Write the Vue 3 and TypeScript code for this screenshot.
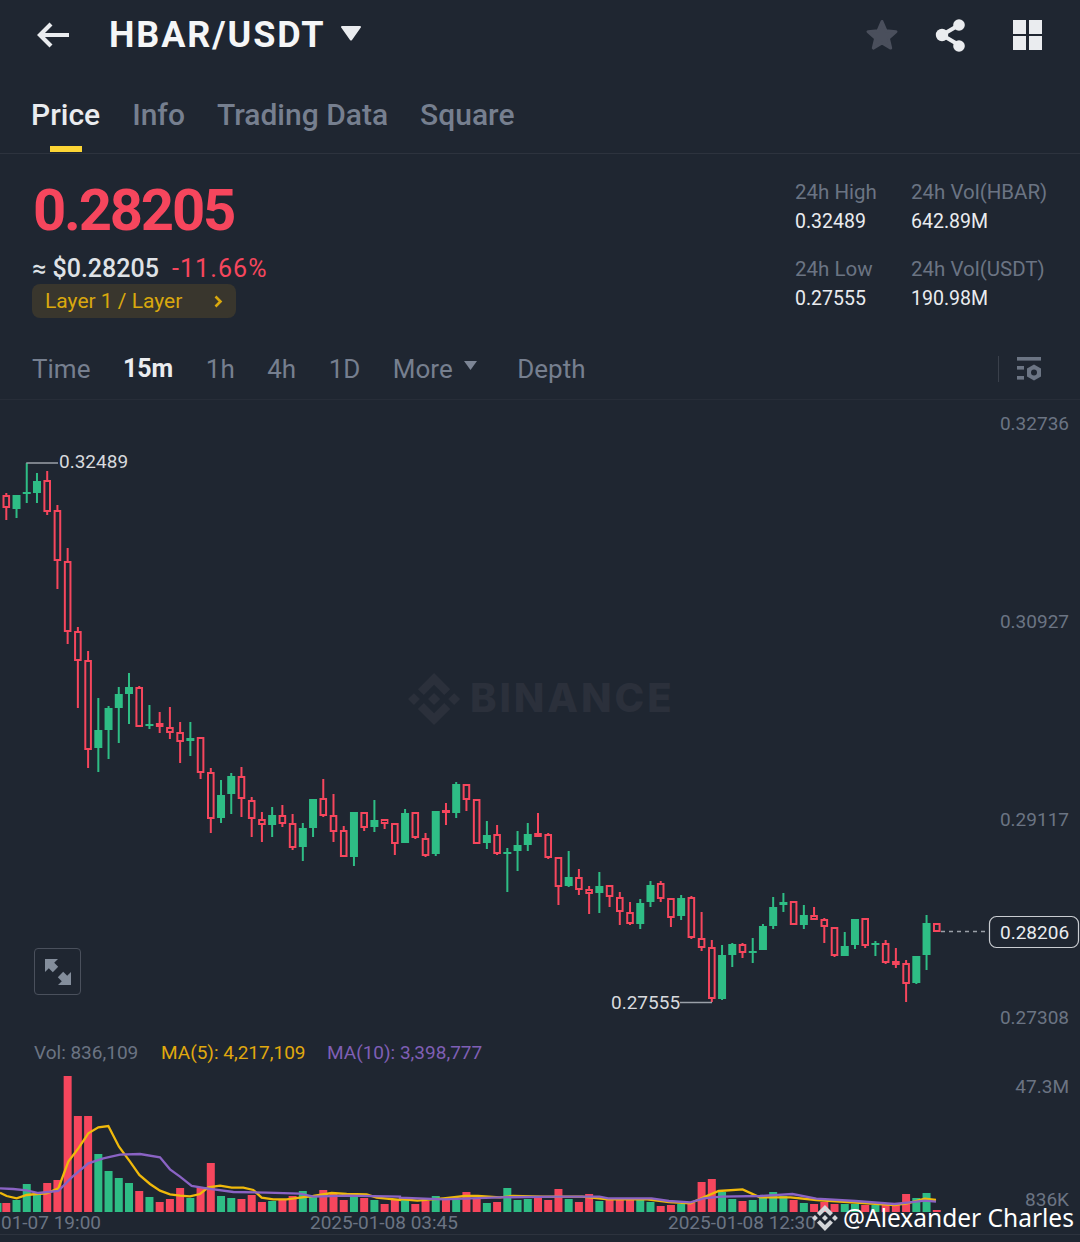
<script setup lang="ts">
import { computed } from 'vue'

// [wickTop, bodyTop, bodyBottom, wickBottom, up]
type Candle = [number, number, number, number, number]

const STEP = 10.225
const X0 = 6.3
const BASE = 1212

const candles: Candle[] = [
  [493, 495, 508, 520, 0], [495, 495, 509, 518, 1], [463, 492, 494, 503, 1], [473, 481, 493, 503, 1],
  [471, 480, 512, 515, 0], [505, 510, 561, 589, 0], [548, 561, 632, 644, 0], [627, 631, 661, 708, 0],
  [651, 660, 750, 768, 0], [698, 730, 748, 772, 1], [706, 708, 730, 759, 1], [687, 694, 708, 743, 1],
  [673, 687, 694, 724, 1], [686, 687, 727, 727, 0], [705, 724, 726, 729, 1], [712, 723, 727, 733, 0],
  [707, 727, 733, 739, 0], [722, 732, 742, 763, 0], [722, 738, 741, 756, 1], [737, 737, 773, 779, 0],
  [768, 772, 819, 833, 0], [780, 795, 818, 823, 1], [773, 776, 794, 814, 1], [767, 776, 799, 817, 0],
  [797, 800, 819, 837, 0], [812, 819, 825, 842, 0], [807, 815, 825, 837, 1], [805, 815, 824, 827, 0],
  [814, 823, 848, 850, 0], [823, 828, 847, 861, 1], [799, 799, 828, 837, 1], [779, 798, 816, 817, 0],
  [794, 815, 832, 842, 0], [826, 830, 857, 857, 0], [812, 812, 857, 866, 1], [812, 812, 828, 831, 0],
  [800, 820, 827, 832, 1], [819, 819, 824, 829, 0], [823, 823, 844, 855, 0], [809, 813, 843, 843, 1],
  [812, 812, 838, 839, 0], [833, 838, 856, 857, 0], [811, 811, 854, 856, 1], [803, 810, 813, 825, 0],
  [782, 784, 813, 818, 1], [784, 784, 800, 811, 0], [799, 799, 844, 844, 0], [821, 835, 843, 849, 1],
  [825, 834, 854, 855, 0], [848, 852, 853, 892, 1], [831, 845, 851, 871, 1], [823, 834, 845, 851, 1],
  [813, 833, 837, 837, 0], [833, 834, 858, 859, 0], [857, 857, 887, 905, 0], [851, 877, 886, 887, 1],
  [869, 877, 890, 895, 0], [886, 889, 894, 914, 0], [872, 886, 893, 913, 1], [885, 885, 897, 907, 0],
  [892, 897, 912, 925, 0], [902, 912, 924, 925, 0], [899, 903, 924, 929, 1], [881, 885, 902, 907, 1],
  [881, 883, 899, 902, 0], [898, 898, 918, 927, 0], [895, 898, 916, 920, 1], [896, 897, 938, 939, 0],
  [912, 938, 948, 951, 0], [940, 947, 999, 1002, 0], [945, 955, 999, 1000, 1], [943, 944, 955, 967, 1],
  [943, 944, 953, 958, 0], [938, 951, 953, 963, 1], [924, 926, 950, 950, 1], [897, 907, 926, 929, 1],
  [893, 902, 905, 912, 1], [901, 901, 925, 925, 0], [905, 915, 925, 929, 1], [907, 915, 920, 920, 0],
  [918, 919, 927, 943, 0], [927, 927, 956, 957, 0], [932, 946, 956, 956, 1], [919, 919, 945, 949, 1],
  [918, 918, 946, 948, 0], [941, 943, 944, 956, 1], [940, 943, 963, 964, 0], [948, 961, 965, 968, 0],
  [960, 963, 984, 1002, 0], [956, 956, 983, 984, 1], [915, 923, 955, 970, 1], [923, 923, 932, 932, 0]
]

// bar height in px, index matches the candle above it
const volumes = [
  9, 12, 28, 18, 29, 32, 136, 96, 96, 58, 41, 34, 29, 21, 15, 10, 13, 24, 14, 25, 49, 16, 14, 13, 17, 10, 11, 12,
  16, 21, 15, 22, 18, 12, 16, 14, 12, 8, 12, 14, 8, 11, 16, 13, 12, 20, 13, 9, 10, 24, 12, 13, 16, 12, 23, 13, 10,
  18, 11, 13, 12, 13, 12, 10, 6, 7, 8, 9, 30, 33, 20, 13, 11, 12, 14, 20, 16, 12, 9, 8, 10, 8, 8, 8, 7, 7, 7, 7,
  18, 14, 19, 2
]

const ma5Left = [[0,458],[20,468],[50,475],[80,465],[110,462],[140,460],[175,445],[205,365],[235,325],[265,280],[295,262],[325,258],[357,320],[390,365],[418,405],[450,432],[480,452],[510,463],[540,467],[570,469],[600,462],[625,442],[660,437],[695,443],[730,443],[760,450],[785,473],[820,478],[860,478],[900,473],[940,468],[995,459],[1040,462],[1100,463],[1130,473],[1200,480]]
const ma5Right = [[0,237],[40,242],[100,235],[150,228],[180,228],[230,232],[260,228],[330,230],[420,230],[480,238],[570,238],[620,246],[670,250],[700,232],[735,213],[790,208],[830,232],[900,232],[960,240],[1050,248],[1140,255],[1170,250],[1210,236],[1236,240]]
const ma10Left = [[0,445],[40,447],[80,451],[115,459],[175,453],[215,412],[265,370],[310,355],[360,344],[420,342],[480,352],[510,388],[540,410],[575,438],[620,445],[700,456],[800,458],[900,461],[940,470],[1040,467],[1200,470]]
const ma10Right = [[0,233],[100,238],[230,232],[360,230],[460,230],[480,235],[580,235],[620,243],[670,247],[700,235],[740,230],[830,228],[905,222],[960,236],[1050,243],[1140,252],[1170,248],[1210,242],[1236,245]]

function linePoints(left: number[][], right: number[][]) {
  const a = left.map(([x, y]) => `${x / 3},${1040 + y / 3}`)
  const b = right.map(([x, y]) => `${400 + x / 2.306},${1120 + y / 3}`)
  return [...a, ...b].join(' ')
}

const ma5 = computed(() => linePoints(ma5Left, ma5Right))
const ma10 = computed(() => linePoints(ma10Left, ma10Right))

const candleItems = computed(() =>
  candles.map(([wt, bt, bb, wb, up], i) => ({
    x: X0 + i * STEP,
    wt, bt, bb, wb,
    color: up ? '#2ebd85' : '#f6465d',
    filled: up === 1 || bb - bt < 4
  }))
)

const bars = computed(() =>
  volumes.map((h, i) => ({
    x: X0 + i * STEP - 4,
    y: BASE - h,
    h,
    color: candles[i][4] ? '#2ebd85' : '#f6465d'
  }))
)

const tabs = ['Price', 'Info', 'Trading Data', 'Square']
const intervals = ['Time', '15m', '1h', '4h', '1D']
const stats = [
  { label: '24h High', value: '0.32489' },
  { label: '24h Vol(HBAR)', value: '642.89M' },
  { label: '24h Low', value: '0.27555' },
  { label: '24h Vol(USDT)', value: '190.98M' }
]
const priceAxis = [
  { y: 430, text: '0.32736' },
  { y: 628, text: '0.30927' },
  { y: 826, text: '0.29117' },
  { y: 1024, text: '0.27308' },
  { y: 1093, text: '47.3M' },
  { y: 1206, text: '836K' }
]
const LOGO = 'M38.2 53.2 62.8 28.6 87.4 53.2 101.7 38.9 62.8 0 23.9 38.9ZM0 62.8 14.3 48.5 28.6 62.8 14.3 77.1ZM38.2 72.3 62.8 96.9 87.4 72.3 101.7 86.6 62.8 125.5 23.9 86.6ZM96.9 62.8 111.2 48.5 125.5 62.8 111.2 77.1ZM77.3 62.8 62.8 48.2 48.3 62.8 62.8 77.3Z'
</script>

<template>
  <div class="page">
    <header class="topbar">
      <svg class="back" width="34" height="28" viewBox="0 0 34 28">
        <path d="M14 3 3 14l11 11M4 14h28" fill="none" stroke="#eaecef" stroke-width="4.2" />
      </svg>
      <h1 class="pair">HBAR/USDT</h1>
      <svg class="caret" width="20" height="15" viewBox="0 0 20 15">
        <path d="M1 0h18a1 1 0 0 1 .8 1.6L11 14a1.3 1.3 0 0 1-2 0L.2 1.600A1 1 0 0 1 1 0Z" fill="#eaecef" />
      </svg>
      <div class="top-icons">
        <svg width="34" height="34" viewBox="0 0 34 34">
          <path d="M17 3.500 21 12.800l10 .9-7.600 6.600 2.300 9.800L17 25l-8.700 5.100 2.300-9.800L3 13.700l10-.9Z" fill="#4a4f5c" stroke="#4a4f5c" stroke-width="3" stroke-linejoin="round" />
        </svg>
        <svg width="34" height="34" viewBox="0 0 34 34">
          <g fill="#eaecef" stroke="#eaecef">
            <path d="M8 17 25 7M8 17l17 10" stroke-width="4" fill="none" />
            <circle cx="25" cy="7" r="5.800" stroke="none" />
            <circle cx="8" cy="17" r="6.200" stroke="none" />
            <circle cx="25" cy="28" r="5.800" stroke="none" />
          </g>
        </svg>
        <div class="grid-icon"><i></i><i></i><i></i><i></i></div>
      </div>
    </header>

    <nav class="tabs">
      <span v-for="(t, i) in tabs" :key="t" class="tab" :class="{ active: i === 0 }">{{ t }}</span>
    </nav>

    <section class="summary">
      <div class="price-col">
        <div class="last">0.28205</div>
        <div class="approx">
          <span class="usd">≈ $0.28205</span>
          <span class="change">-11.66%</span>
        </div>
        <div class="chip">
          <span>Layer 1 / Layer</span>
          <svg width="9" height="13" viewBox="0 0 9 13">
            <path d="M1.500 1.500 6.500 6.500l-5 5" fill="none" stroke="#d9a80e" stroke-width="2.600" />
          </svg>
        </div>
      </div>
      <div class="stats">
        <div v-for="s in stats" :key="s.label" class="stat">
          <div class="stat-label">{{ s.label }}</div>
          <div class="stat-value">{{ s.value }}</div>
        </div>
      </div>
    </section>

    <div class="intervals">
      <span v-for="(t, i) in intervals" :key="t" class="interval" :class="{ on: i === 1 }">{{ t }}</span>
      <span class="interval more">More
        <svg width="13" height="9" viewBox="0 0 13 9"><path d="M0 0h13L6.500 9Z" fill="#7c8595" /></svg>
      </span>
      <span class="interval depth">Depth</span>
      <div class="tools">
        <svg width="26" height="26" viewBox="0 0 26 26">
          <g fill="#6c7584">
            <rect x="1" y="1" width="24" height="3.600" />
            <rect x="1" y="10" width="7" height="3.600" />
            <rect x="1" y="20" width="7" height="3.600" />
            <path fill-rule="evenodd" d="M18 8.500 25 12.500v8L18 24.500l-7-4v-8ZM18 13.500a3 3 0 1 0 0 6 3 3 0 0 0 0-6Z" />
          </g>
        </svg>
      </div>
    </div>

    <div class="chart">
      <svg class="plot" width="1080" height="842" viewBox="0 400 1080 842">
        <g transform="translate(408 673)" fill="#2b303b">
          <path :d="LOGO" transform="scale(0.415)" />
        </g>
        <text x="470" y="712" class="brand">BINANCE</text>

        <g v-for="(c, i) in candleItems" :key="i">
          <template v-if="c.filled">
            <rect :x="c.x - 1" :y="c.wt" width="2" :height="c.wb - c.wt" :fill="c.color" />
            <rect :x="c.x - 4" :y="c.bt" width="8" :height="Math.max(c.bb - c.bt, 2)" :fill="c.color" />
          </template>
          <template v-else>
            <rect :x="c.x - 1" :y="c.wt" width="2" :height="c.bt - c.wt" :fill="c.color" />
            <rect :x="c.x - 1" :y="c.bb" width="2" :height="c.wb - c.bb" :fill="c.color" />
            <rect :x="c.x - 2.8" :y="c.bt + 1" width="5.600" :height="c.bb - c.bt - 2" fill="none" :stroke="c.color" stroke-width="2" />
          </template>
        </g>

        <path d="M27 463.500V463H58" fill="none" stroke="#9aa0a8" stroke-width="1.500" />
        <text x="59" y="467.500" class="mark">0.32489</text>
        <path d="M680 1002.500H712" fill="none" stroke="#9aa0a8" stroke-width="1.500" />
        <text x="611" y="1008.500" class="mark">0.27555</text>

        <path d="M941 931.500H989" fill="none" stroke="#9aa0a8" stroke-width="1.500" stroke-dasharray="4 4" />
        <rect x="989.500" y="916.500" width="89" height="31" rx="7" fill="#1f2631" stroke="#c9ccd1" stroke-width="1.200" />
        <text x="1000" y="938.500" class="tag">0.28206</text>

        <text v-for="a in priceAxis" :key="a.text" x="1069" :y="a.y" class="axis" text-anchor="end">{{ a.text }}</text>

        <text x="34" y="1059" class="legend vol">Vol: 836,109</text>
        <text x="161" y="1059" class="legend m5">MA(5): 4,217,109</text>
        <text x="327" y="1059" class="legend m10">MA(10): 3,398,777</text>

        <rect v-for="(b, i) in bars" :key="i" :x="b.x" :y="b.y" width="8" :height="b.h" :fill="b.color" />
        <rect x="-4" y="1203" width="5.500" height="9" fill="#2ebd85" />
        <polyline :points="ma5" fill="none" stroke="#f0b90b" stroke-width="2.300" />
        <polyline :points="ma10" fill="none" stroke="#8a63c4" stroke-width="2.300" />

        <text x="1" y="1229" class="axis">01-07 19:00</text>
        <text x="310" y="1229" class="axis">2025-01-08 03:45</text>
        <text x="668" y="1229" class="axis">2025-01-08 12:30</text>
      </svg>

      <button class="expand" type="button">
        <svg width="30" height="30" viewBox="0 0 30 30">
          <path d="M2 2h13l-3.800 3.800 4 4-5.400 5.400-4-4L2 15ZM28 28H15l3.800-3.800-4-4 5.400-5.400 4 4L28 15Z" fill="#848e9c" />
        </svg>
      </button>

      <div class="credit">
        <svg width="26" height="28" viewBox="0 0 126 126">
          <path :d="LOGO" fill="#d4d6d9" />
        </svg>
        <span>@Alexander Charles</span>
      </div>
    </div>

    <div class="foot-line"></div>
  </div>
</template>

<style>
html,
body {
  margin: 0;
  background: #1f2631;
}
</style>

<style scoped>
.page {
  width: 1080px;
  height: 1242px;
  overflow: hidden;
  background: #1f2631;
  color: #eaecef;
  font-family: Roboto, "Noto Sans", sans-serif;
  display: flex;
  flex-direction: column;
}
.topbar {
  height: 70px;
  flex: none;
  display: flex;
  align-items: center;
  padding: 0 38px 0 37px;
}
.back {
  flex: none;
}
.pair {
  margin: 0 0 0 38px;
  font-size: 36px;
  font-weight: 700;
  line-height: 70px;
  letter-spacing: 1.900px;
  color: #f5f6f7;
}
.caret {
  margin: 0 0 4px 15px;
}
.top-icons {
  margin-left: auto;
  display: flex;
  align-items: center;
  gap: 35px;
}
.grid-icon {
  width: 29px;
  height: 30px;
  margin-left: 10px;
  display: grid;
  grid-template-columns: 13px 13px;
  grid-template-rows: 14px 14px;
  gap: 2px 3px;
}
.grid-icon i {
  background: #eaecef;
}
.tabs {
  height: 84px;
  flex: none;
  box-sizing: border-box;
  display: flex;
  gap: 32px;
  padding-left: 31px;
  border-bottom: 1px solid #2d333e;
}
.tab {
  position: relative;
  font-size: 30px;
  line-height: 90px;
  height: 83px;
  font-weight: 500;
  color: #767f8f;
}
.tab.active {
  color: #eaecef;
}
.tab.active::after {
  content: "";
  position: absolute;
  left: 19px;
  bottom: 1px;
  width: 32px;
  height: 6px;
  background: #fcd535;
}
.summary {
  height: 170px;
  flex: none;
  box-sizing: border-box;
  display: flex;
  justify-content: space-between;
  padding: 26px 0 0 32px;
}
.last {
  font-size: 58px;
  font-weight: 700;
  line-height: 60px;
  letter-spacing: -2.200px;
  color: #f6465d;
  margin-left: 1px;
}
.approx {
  margin-top: 14px;
  display: flex;
  gap: 13px;
  font-size: 25px;
  line-height: 30px;
  font-weight: 500;
}
.usd {
  color: #dfe2e6;
}
.change {
  color: #f6465d;
  font-weight: 400;
  letter-spacing: 1.100px;
}
.chip {
  width: 204px;
  height: 34px;
  box-sizing: border-box;
  border-radius: 8px;
  background: #39362d;
  color: #d9a80e;
  font-size: 21px;
  display: flex;
  align-items: center;
  justify-content: space-between;
  padding: 0 13px;
}
.stats {
  display: grid;
  grid-template-columns: 116px 169px;
  row-gap: 18px;
  margin-top: -2px;
  height: 120px;
}
.stat-label {
  font-size: 20.500px;
  line-height: 29px;
  color: #6b7483;
}
.stat-value {
  font-size: 19.500px;
  line-height: 30px;
  color: #eaecef;
}
.intervals {
  height: 76px;
  flex: none;
  box-sizing: border-box;
  display: flex;
  align-items: center;
  gap: 32.500px;
  padding: 14px 38px 0 32px;
  border-bottom: 1px solid #272d38;
}
.interval {
  font-size: 26px;
  color: #767f8f;
}
.interval.on {
  font-size: 25px;
  color: #eaecef;
  font-weight: 700;
}
.more {
  display: flex;
  align-items: center;
  gap: 11px;
}
.more svg {
  margin-bottom: 6px;
}
.depth {
  margin-left: 8px;
}
.tools {
  margin-left: auto;
  height: 26px;
  border-left: 1px solid #3a404b;
  padding-left: 17px;
  display: flex;
  align-items: center;
}
.chart {
  position: relative;
  height: 834px;
  flex: none;
}
.plot {
  display: block;
}
.brand {
  font-family: Inter, sans-serif;
  font-size: 40px;
  font-weight: 800;
  letter-spacing: 2.900px;
  fill: #2b303b;
}
.mark {
  font-size: 19px;
  fill: #d8dade;
}
.tag {
  font-size: 19px;
  fill: #eaecef;
}
.axis {
  font-size: 19px;
  fill: #6b7483;
}
.legend {
  font-size: 19px;
}
.vol {
  fill: #6b7483;
}
.m5 {
  fill: #e0a90e;
}
.m10 {
  fill: #7f5fb5;
}
.expand {
  position: absolute;
  left: 34px;
  top: 548px;
  width: 47px;
  height: 47px;
  padding: 0;
  box-sizing: border-box;
  background: transparent;
  border: 1.500px solid #4a505c;
  border-radius: 4px;
  display: flex;
  align-items: center;
  justify-content: center;
}
.credit {
  position: absolute;
  left: 812px;
  top: 804px;
  display: flex;
  align-items: center;
  gap: 5px;
  color: #fff;
  font-family: "Noto Sans", sans-serif;
  font-size: 24.500px;
  line-height: 28px;
  white-space: nowrap;
}
.foot-line {
  height: 1px;
  flex: none;
  background: #2d333e;
}
</style>
